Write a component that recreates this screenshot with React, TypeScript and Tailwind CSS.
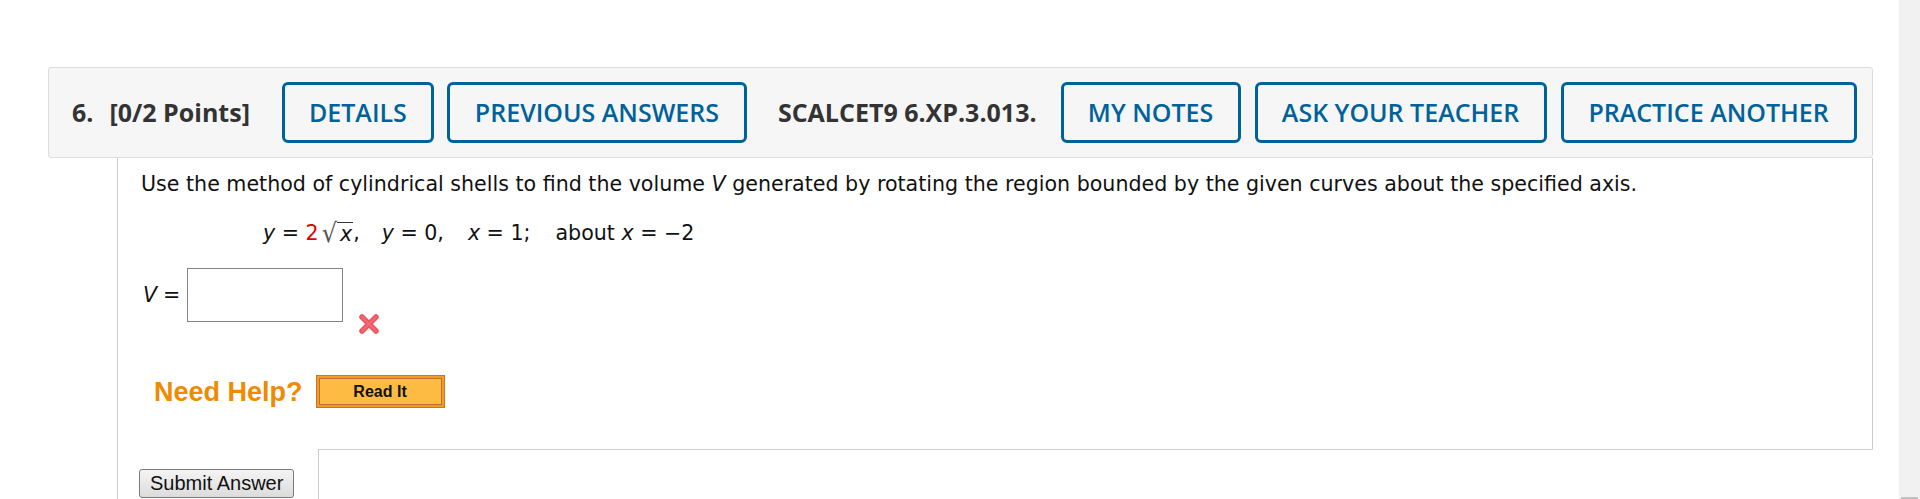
import React from "react";

const btn =
  "shrink-0 h-[61px] border-[3px] border-[#00629b] rounded-[6px] bg-[#f6f6f6] text-[#00629b] text-[25px] font-semibold leading-none whitespace-nowrap text-center";

const label = "shrink-0 text-[25px] font-bold text-[#333] whitespace-nowrap";

const QuestionHeader = () => {
  return (
    <div className="h-[91px] flex items-center border border-[#dcdcdc] rounded-[3px] bg-[#f6f6f6] pl-[23px] font-['Open_Sans',sans-serif]">
      <span className={label}>6.</span>
      <span className={`${label} ml-[16px]`}>[0/2 Points]</span>
      <button className={`${btn} ml-[32px] w-[152px]`}>DETAILS</button>
      <button className={`${btn} ml-[13px] w-[300px]`}>PREVIOUS ANSWERS</button>
      <span className={`${label} ml-[31px]`}>SCALCET9 6.XP.3.013.</span>
      <button className={`${btn} ml-[24px] w-[180px]`}>MY NOTES</button>
      <button className={`${btn} ml-[14px] w-[292px]`}>ASK YOUR TEACHER</button>
      <button className={`${btn} ml-[14px] w-[296px]`}>PRACTICE ANOTHER</button>
    </div>
  );
};

const WrongMark = () => (
  <svg width="22" height="22" viewBox="0 0 22 22" className="self-end mb-[-13px] ml-[15px]">
    <path d="M4 4 L18 18 M18 4 L4 18" stroke="#ee5560" strokeWidth="5.5" strokeLinecap="round" />
    <path d="M4 4 L18 18 M18 4 L4 18" stroke="#f67a82" strokeWidth="2" strokeLinecap="round" opacity="0.6" />
  </svg>
);

export default function App() {
  return (
    <div className="flex h-[499px] w-full overflow-hidden bg-white">
      <div className="flex-1 pt-[67px] pl-[48px] pr-[26px]">
        <QuestionHeader />

        <div className="ml-[69px] border-l border-[#cccccc] font-['DejaVu_Sans',Verdana,sans-serif] text-[20.6px] text-[#111]">
          <div className="border-r border-[#cccccc] pl-[23px] pt-[14px]">
            <p className="leading-[24px]">
              Use the method of cylindrical shells to find the volume <i>V</i> generated by rotating the region bounded by the given curves about the specified axis.
            </p>

            <div className="mt-[25px] pl-[122px] leading-[24px] whitespace-nowrap flex items-end">
              <span><i>y</i> = <span className="text-[#e00000]">2</span></span>
              <span className="ml-[3px] inline-flex items-end">
                <span className="text-[#555] text-[24px] leading-[24px] scale-y-110">√</span>
                <span className="border-t border-[#333] italic pl-[3px] pr-[1px] leading-[22px]">x</span>
              </span>
              <span>,</span>
              <span className="ml-[22px]"><i>y</i> = 0,</span>
              <span className="ml-[24px]"><i>x</i> = 1;</span>
              <span className="ml-[25px]">about <i>x</i> = −2</span>
            </div>

            <div className="mt-[23px] flex items-center">
              <i className="ml-[2px]">V</i>
              <span className="ml-[6px]">=</span>
              <input type="text" className="ml-[7px] w-[156px] h-[54px] border border-[#858585] bg-white" />
              <WrongMark />
            </div>

            <div className="mt-[53px] flex items-center pl-[13px] pb-[41px]">
              <span className="font-['Liberation_Sans',Arial,sans-serif] font-bold text-[27px] leading-[32px] text-[#f08a00]">Need Help?</span>
              <button className="ml-[13px] w-[129px] h-[33px] p-[2px] border border-[#c97a1c] bg-[#f39a2a]">
                <span className="flex h-full items-center justify-center border border-[#b8732a] bg-[#fdbb44] font-['Liberation_Sans',Arial,sans-serif] font-bold text-[16px] text-[#111]">
                  Read It
                </span>
              </button>
            </div>
          </div>

          <div className="flex">
            <div className="w-[200px]" />
            <div className="flex-1 h-0 border-r border-b border-[#cccccc] rounded-br-[4px]" />
          </div>

          <div className="flex h-[60px]">
            <div className="w-[200px] pl-[21px] pt-[18px]">
              <button className="h-[29px] px-[10px] rounded-[3px] border border-[#7a7a7a] bg-gradient-to-b from-[#f4f4f4] to-[#dcdcdc] font-['Liberation_Sans',Arial,sans-serif] text-[20px] leading-none text-[#111] whitespace-nowrap">
                Submit Answer
              </button>
            </div>
            <div className="flex-1 border-l border-[#cccccc]" />
          </div>
        </div>
      </div>

      <div className="w-[21px] bg-[#f1f1f1] flex flex-col justify-end">
        <div className="mx-[2px] h-[2px] bg-[#c1c1c1]" />
      </div>
    </div>
  );
}
